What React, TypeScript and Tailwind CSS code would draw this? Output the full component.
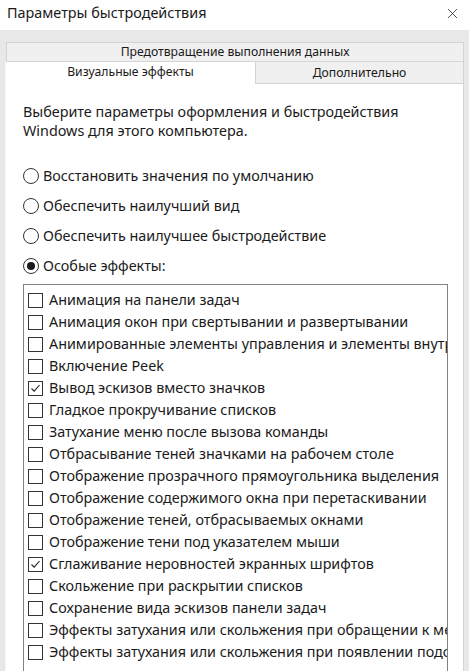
import { X } from "lucide-react";

const effects: { label: string; checked?: boolean }[] = [
  { label: "Анимация на панели задач" },
  { label: "Анимация окон при свертывании и развертывании" },
  { label: "Анимированные элементы управления и элементы внутри окна" },
  { label: "Включение Peek" },
  { label: "Вывод эскизов вместо значков", checked: true },
  { label: "Гладкое прокручивание списков" },
  { label: "Затухание меню после вызова команды" },
  { label: "Отбрасывание теней значками на рабочем столе" },
  { label: "Отображение прозрачного прямоугольника выделения" },
  { label: "Отображение содержимого окна при перетаскивании" },
  { label: "Отображение теней, отбрасываемых окнами" },
  { label: "Отображение тени под указателем мыши" },
  { label: "Сглаживание неровностей экранных шрифтов", checked: true },
  { label: "Скольжение при раскрытии списков" },
  { label: "Сохранение вида эскизов панели задач" },
  { label: "Эффекты затухания или скольжения при обращении к меню" },
  { label: "Эффекты затухания или скольжения при появлении подсказок" },
];

const presets = [
  { label: "Восстановить значения по умолчанию" },
  { label: "Обеспечить наилучший вид" },
  { label: "Обеспечить наилучшее быстродействие" },
  { label: "Особые эффекты:", selected: true },
];

function Radio({ selected }: { selected?: boolean }) {
  return (
    <span className="flex h-[16px] w-[16px] shrink-0 items-center justify-center rounded-full border border-[#333] bg-white">
      {selected && <span className="h-[8px] w-[8px] rounded-full bg-[#1a1a1a]" />}
    </span>
  );
}

function Checkbox({ checked }: { checked?: boolean }) {
  return (
    <span className="flex h-[15px] w-[15px] shrink-0 items-center justify-center border border-[#333] bg-white">
      {checked && (
        <svg width="11" height="11" viewBox="0 0 11 11">
          <path d="M1.5 5.5 L4.2 8.2 L9.5 2" fill="none" stroke="#222" strokeWidth="1.1" />
        </svg>
      )}
    </span>
  );
}

export default function App() {
  return (
    <div
      className="flex h-[671px] w-[469px] flex-col overflow-hidden bg-white text-[#1a1a1a]"
      style={{ fontFamily: '"Noto Sans", "Open Sans", sans-serif' }}
    >
      {/* title bar */}
      <div className="flex h-[30px] shrink-0 items-center justify-between pb-[4px] pl-[7px] pr-[8px]">
        <span className="text-[14.4px] leading-none">Параметры быстродействия</span>
        <X size={17} strokeWidth={1.1} className="text-[#222]" />
      </div>

      <div className="flex flex-1 flex-col bg-[#e8e8e8] pl-[5px] pr-[5px] pt-[12px]">
        {/* tabs */}
        <div className="ml-[1px] flex h-[20px] items-center justify-center border border-[#d4d4d4] bg-[#f0f0f0] text-[12.2px]">
          Предотвращение выполнения данных
        </div>
        <div className="flex h-[22px] text-[12.2px]">
          <div className="flex w-[250px] items-center justify-center border-l border-[#f4f4f4] bg-white pb-[2px]">
            Визуальные эффекты
          </div>
          <div className="flex flex-1 items-center justify-center border border-t-0 border-[#d4d4d4] bg-[#f0f0f0] pt-[2px]">
            Дополнительно
          </div>
        </div>

        {/* visual effects page */}
        <div className="flex flex-1 flex-col border-x border-l-[#f4f4f4] border-r-[#d4d4d4] bg-white pl-[17px] pr-[15px] pt-[18px]">
          <p className="text-[14.35px] leading-[19px]">
            Выберите параметры оформления и быстродействия
            <br />
            Windows для этого компьютера.
          </p>

          <div className="mt-[26px] flex flex-col gap-[10px]">
            {presets.map((p) => (
              <label key={p.label} className="flex h-[20px] items-center gap-[4px] text-[14.35px]">
                <Radio selected={p.selected} />
                <span>{p.label}</span>
              </label>
            ))}
          </div>

          <div className="mt-[8px] flex-1 overflow-hidden border border-b-0 border-[#828282] pl-[4px] pt-[4px]">
            {effects.map((e) => (
              <div key={e.label} className="flex h-[22px] items-center gap-[6px] text-[14.35px]">
                <Checkbox checked={e.checked} />
                <span className="whitespace-nowrap">{e.label}</span>
              </div>
            ))}
          </div>
        </div>
      </div>
    </div>
  );
}
